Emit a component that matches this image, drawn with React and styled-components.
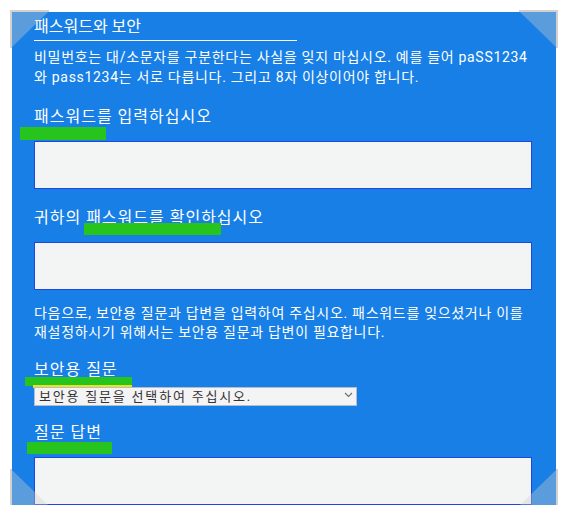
import React from 'react'
import styled, { createGlobalStyle } from 'styled-components'

const GlobalStyle = createGlobalStyle`
  html, body {
    margin: 0;
    padding: 0;
    background: #ffffff;
  }
  body {
    font-family: Roboto, "Noto Sans CJK KR", sans-serif;
  }
`

const Frame = styled.div`
  position: relative;
  margin: 12px 12px 0 12px;
  width: 544px;
  height: 493px;
`

const Panel = styled.div`
  height: 100%;
  box-sizing: border-box;
  overflow: hidden;
  background: #187fe6;
  color: #ffffff;
  padding: 5px 24px 0 22px;
  display: flex;
  flex-direction: column;
  align-items: stretch;
`

const Title = styled.h2`
  margin: 0;
  width: 263px;
  font-size: 16px;
  font-weight: 400;
  line-height: 20px;
  padding-bottom: 3px;
  border-bottom: 1px solid #ffffff;
`

const Note = styled.p`
  margin: ${p => p.$top}px 0 0 0;
  font-size: 14px;
  line-height: 19.5px;
  letter-spacing: 0.7px;
`

const Label = styled.label`
  position: relative;
  display: block;
  margin-top: ${p => p.$top}px;
  font-size: 16px;
  line-height: 20px;
  letter-spacing: 1px;
`

const Mark = styled.span`
  position: absolute;
  left: ${p => p.$left}px;
  top: ${p => p.$top}px;
  width: ${p => p.$width}px;
  height: ${p => p.$height}px;
  background: ${p => p.$color || '#26c41c'};
`

const TextBox = styled.div`
  margin-top: 14px;
  height: 48px;
  box-sizing: border-box;
  flex-shrink: 0;
  background: #f3f4f4;
  border: 1px solid #1f45e2;
`

const SelectWrap = styled.div`
  position: relative;
  margin-top: 6px;
  width: 323px;
  height: 19px;
  flex-shrink: 0;
`

const Select = styled.select`
  appearance: none;
  width: 100%;
  height: 100%;
  box-sizing: border-box;
  margin: 0;
  padding: 0 0 0 4px;
  border: 1px solid #b4bccf;
  border-radius: 0;
  background: #f4f4f4;
  color: #333333;
  font-family: Roboto, "Noto Sans CJK KR", sans-serif;
  font-size: 13px;
  letter-spacing: 1.8px;
  line-height: 17px;
`

const Chevron = styled.svg`
  position: absolute;
  right: 4px;
  top: 6px;
  pointer-events: none;
`

const Corner = styled.svg`
  position: absolute;
  ${p => (p.$at.includes('t') ? 'top: -2px;' : 'bottom: -2px;')}
  ${p => (p.$at.includes('l') ? 'left: -2px;' : 'right: -2px;')}
  transform: scale(${p => (p.$at.includes('r') ? -1 : 1)}, ${p => (p.$at.includes('b') ? -1 : 1)});
  pointer-events: none;
`

const Fold = ({ at }) => (
  <Corner $at={at} width="40" height="40" viewBox="0 0 40 40">
    <path d="M0 0H39V2H2V38H0Z" fill="rgba(190,190,190,0.7)" />
    <polygon points="2,2 38,2 2,37" fill="rgba(205,205,205,0.37)" />
  </Corner>
)

export default function App() {
  return (
    <>
      <GlobalStyle />
      <Frame>
        <Panel>
          <Title>패스워드와 보안</Title>
          <Note $top={7}>
            비밀번호는 대/소문자를 구분한다는 사실을 잊지 마십시오. 예를 들어 paSS1234 와 pass1234는 서로 다릅니다. 그리고 8자 이상이어야 합니다.
          </Note>

          <Label $top={20}>
            패스워드를 입력하십시오
            <Mark $left={-14} $top={20} $width={86} $height={13} />
          </Label>
          <TextBox />

          <Label $top={19}>
            귀하의 패스워드를 확인하십시오
            <Mark $left={50} $top={15} $width={137} $height={12} />
          </Label>
          <TextBox />

          <Note $top={13.5}>
            다음으로, 보안용 질문과 답변을 입력하여 주십시오. 패스워드를 잊으셨거나 이를 재설정하시기 위해서는 보안용 질문과 답변이 필요합니다.
          </Note>

          <Label $top={17.5}>
            보안용 질문
            <Mark $left={-9} $top={17} $width={107} $height={9} />
            <Mark $left={-1} $top={25} $width={99} $height={3} $color="#ece21e" />
          </Label>
          <SelectWrap>
            <Select defaultValue="">
              <option value="">보안용 질문을 선택하여 주십시오.</option>
            </Select>
            <Chevron width="9" height="6" viewBox="0 0 9 6">
              <polyline points="1,1 4.5,4.5 8,1" fill="none" stroke="#707070" strokeWidth="1.2" />
            </Chevron>
          </SelectWrap>

          <Label $top={17.5}>
            질문 답변
            <Mark $left={-7} $top={19} $width={85} $height={12} />
          </Label>
          <TextBox />
        </Panel>
        <Fold at="tl" />
        <Fold at="tr" />
        <Fold at="bl" />
        <Fold at="br" />
      </Frame>
    </>
  )
}
